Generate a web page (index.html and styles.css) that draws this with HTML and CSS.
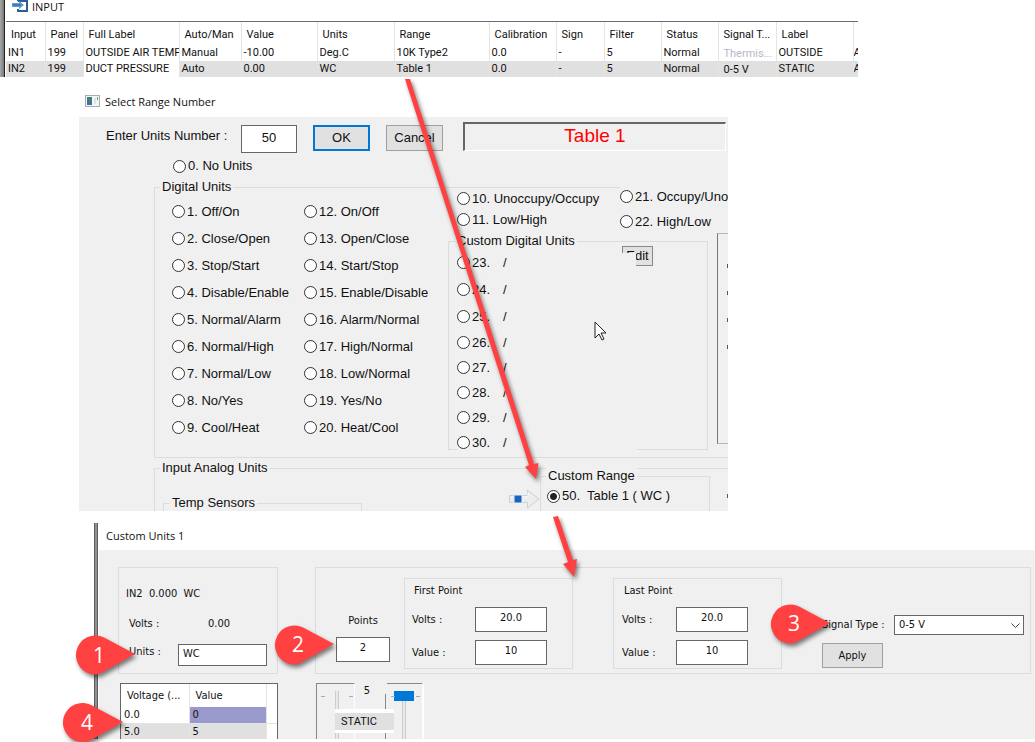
FILE: index.html
```html
<!DOCTYPE html>
<html lang="en">
<head>
  <title>Input range setup</title>
  <meta charset="utf-8">
  <link rel="stylesheet" href="styles.css">
</head>
<body>

<section class="inputs">
  <h1 class="title">
    <svg width="16" height="12" viewBox="0 0 16 12">
      <path d="M6 1V0M6 1H15V11H6V9" fill="none" stroke="#2b5f96" stroke-width="2"/>
      <path d="M0 3h7V1l5 4-5 4V7H0z" fill="#5b9bd5"/>
      <path d="M1 5h8" stroke="#2b5f96"/>
    </svg>
    INPUT
  </h1>
  <table class="grid">
    <colgroup>
      <col class="w39"><col class="w38"><col class="w96"><col class="w62"><col class="w76"><col class="w77"><col class="w95">
      <col class="w67"><col class="w48"><col class="w57"><col class="w57"><col class="w58"><col class="w77"><col>
    </colgroup>
    <thead>
    <tr>
      <th>Input</th><th>Panel</th><th>Full Label</th><th>Auto/Man</th><th>Value</th><th>Units</th><th>Range</th>
      <th>Calibration</th><th>Sign</th><th>Filter</th><th>Status</th><th>Signal T...</th><th>Label</th><th></th>
    </tr>
    </thead>
    <tbody>
    <tr>
      <td>IN1</td><td>199</td><td>OUTSIDE AIR TEMP</td><td>Manual</td><td>-10.00</td><td>Deg.C</td><td>10K Type2</td>
      <td>0.0</td><td>-</td><td>5</td><td>Normal</td><td class="signal muted">Thermis...</td><td>OUTSIDE</td><td>A</td>
    </tr>
    <tr class="selected">
      <td>IN2</td><td>199</td><td class="edit">DUCT PRESSURE</td><td>Auto</td><td>0.00</td><td>WC</td><td>Table 1</td>
      <td>0.0</td><td>-</td><td>5</td><td>Normal</td><td class="signal">0-5 V</td><td>STATIC</td><td>A</td>
    </tr>
    </tbody>
  </table>
</section>

<section class="range">
  <h2 class="title">
    <svg width="15" height="12" viewBox="0 0 15 12">
      <rect x="0.5" y="0.5" width="14" height="11" fill="#f4f6f6" stroke="#a9adb0"/>
      <rect x="2" y="2" width="5" height="8" fill="#3b8279"/>
      <rect x="2" y="6" width="5" height="4" fill="#47709b"/>
      <rect x="9" y="3" width="2" height="6" fill="#d5e5ea"/>
      <rect x="12" y="2" width="1" height="3" fill="#59a07b"/>
    </svg>
    Select Range Number
  </h2>
  <form class="panel">
    <div class="top">
      <label for="unitNumber">Enter Units Number :</label>
      <input type="text" class="box" id="unitNumber" value="50">
      <button type="button" class="btn ok">OK</button>
      <button type="button" class="btn">Cancel</button>
      <output class="current">Table 1</output>
    </div>
    <label class="radio none"><input type="radio" name="unit">0. No Units</label>

    <fieldset class="digital">
      <legend>Digital Units</legend>
      <div class="list">
        <label class="radio"><input type="radio" name="unit">1. Off/On</label>
        <label class="radio"><input type="radio" name="unit">2. Close/Open</label>
        <label class="radio"><input type="radio" name="unit">3. Stop/Start</label>
        <label class="radio"><input type="radio" name="unit">4. Disable/Enable</label>
        <label class="radio"><input type="radio" name="unit">5. Normal/Alarm</label>
        <label class="radio"><input type="radio" name="unit">6. Normal/High</label>
        <label class="radio"><input type="radio" name="unit">7. Normal/Low</label>
        <label class="radio"><input type="radio" name="unit">8. No/Yes</label>
        <label class="radio"><input type="radio" name="unit">9. Cool/Heat</label>
      </div>
      <div class="list">
        <label class="radio"><input type="radio" name="unit">12. On/Off</label>
        <label class="radio"><input type="radio" name="unit">13. Open/Close</label>
        <label class="radio"><input type="radio" name="unit">14. Start/Stop</label>
        <label class="radio"><input type="radio" name="unit">15. Enable/Disable</label>
        <label class="radio"><input type="radio" name="unit">16. Alarm/Normal</label>
        <label class="radio"><input type="radio" name="unit">17. High/Normal</label>
        <label class="radio"><input type="radio" name="unit">18. Low/Normal</label>
        <label class="radio"><input type="radio" name="unit">19. Yes/No</label>
        <label class="radio"><input type="radio" name="unit">20. Heat/Cool</label>
      </div>
      <div class="more">
        <div class="pair">
          <div class="pair-left">
            <label class="radio"><input type="radio" name="unit">10. Unoccupy/Occupy</label>
            <label class="radio"><input type="radio" name="unit">11. Low/High</label>
          </div>
          <div class="pair-right">
            <label class="radio"><input type="radio" name="unit">21. Occupy/Unoccupy</label>
            <label class="radio"><input type="radio" name="unit">22. High/Low</label>
          </div>
        </div>
        <div class="lower">
          <fieldset class="custom">
            <legend>Custom Digital Units</legend>
            <div class="slots">
              <label class="radio"><input type="radio" name="unit"><span>23.</span>/</label>
              <label class="radio"><input type="radio" name="unit"><span>24.</span>/</label>
              <label class="radio"><input type="radio" name="unit"><span>25.</span>/</label>
              <label class="radio"><input type="radio" name="unit"><span>26.</span>/</label>
              <label class="radio"><input type="radio" name="unit"><span>27.</span>/</label>
              <label class="radio"><input type="radio" name="unit"><span>28.</span>/</label>
              <label class="radio"><input type="radio" name="unit"><span>29.</span>/</label>
              <label class="radio"><input type="radio" name="unit"><span>30.</span>/</label>
            </div>
            <button type="button" class="btn edit-btn">Edit</button>
          </fieldset>
          <div class="strip"><i></i><i></i><i></i><i></i></div>
        </div>
      </div>
    </fieldset>

    <fieldset class="analog">
      <legend>Input Analog Units</legend>
      <fieldset class="sensors">
        <legend>Temp Sensors</legend>
      </fieldset>
      <svg class="pointer" width="31" height="20" viewBox="0 0 31 20">
        <path d="M0.5 6.5H18.5V1L30 10 18.5 19V13.5H0.5z" fill="#ececec" stroke="#cfcfcf"/>
        <path d="M2 8H19V4" fill="none" stroke="#fafafa"/>
        <rect x="5" y="6" width="8" height="8" fill="#1467bd" stroke="#e8f0f8"/>
      </svg>
      <fieldset class="custom-range">
        <legend>Custom Range</legend>
        <label class="radio"><input type="radio" name="unit" checked>50.&nbsp; Table 1 ( WC )</label>
      </fieldset>
      <div class="cut"><i></i></div>
    </fieldset>
  </form>
</section>

<section class="units">
  <h2 class="title">Custom Units 1</h2>
  <form class="panel">
    <div class="group status">
      <p>IN2&nbsp; 0.000&nbsp; WC</p>
      <div class="line"><span>Volts :</span><span class="num">0.00</span></div>
      <div class="line"><label for="unitName">Units :</label><input type="text" class="box" id="unitName" value="WC"></div>
    </div>

    <div class="group setup">
      <div class="points">
        <label for="points">Points</label>
        <input type="text" class="box" id="points" value="2">
      </div>
      <div class="group point">
        <h3>First Point</h3>
        <label for="firstVolts">Volts :</label><input type="text" class="box" id="firstVolts" value="20.0">
        <label for="firstValue">Value :</label><input type="text" class="box" id="firstValue" value="10">
      </div>
      <div class="group point last">
        <h3>Last Point</h3>
        <label for="lastVolts">Volts :</label><input type="text" class="box" id="lastVolts" value="20.0">
        <label for="lastValue">Value :</label><input type="text" class="box" id="lastValue" value="10">
      </div>
      <div class="signal-type">
        <label for="signalType">Signal Type :</label>
        <div class="select">
          <select id="signalType"><option>0-5 V</option></select>
          <svg width="9" height="6" viewBox="0 0 9 6"><path d="M0.5 0.5l4 4 4-4" fill="none" stroke="#444"/></svg>
        </div>
        <button type="button" class="btn">Apply</button>
      </div>
    </div>

    <div class="volt-box">
      <table class="volts">
        <colgroup><col class="w68"><col class="w77"><col></colgroup>
        <thead>
        <tr><th>Voltage (...</th><th>Value</th><th></th></tr>
        </thead>
        <tbody>
        <tr><td>0.0</td><td class="active">0</td><td></td></tr>
        <tr class="selected"><td>5.0</td><td>5</td><td></td></tr>
        </tbody>
      </table>
    </div>

    <div class="sliders">
      <div class="slide"><input type="range" class="covered" min="0" max="10" value="5" aria-label="Voltage"></div>
      <output class="level">5</output>
      <div class="slide right"><input type="range" min="0" max="10" value="0" aria-label="Value"></div>
      <span class="tag">STATIC</span>
    </div>
  </form>
</section>

<!-- step markers and arrows over the three windows -->
<svg class="notes" width="1035" height="742" viewBox="0 0 1035 742">
  <path d="M595 322v16l4-4 3 6 2-1-3-6h5z" fill="#fff" stroke="#222"/>
  <g class="arrow">
    <path d="M405 79h5L534 464l4.500-1L536 479 525 467l4-2z"/>
    <path d="M553 517l5-1 15 44 4-1-3 18-11-13 5-2z"/>
  </g>
  <g class="pin">
    <path d="M135 654L104 671.500Q100 674.500 95 674.500A19.500 19.500 0 1 1 104 637.500z"/>
    <path d="M334 644L303 661.500Q299 664.500 294 664.500A19.500 19.500 0 1 1 303 627.500z"/>
    <path d="M830 623L799 640.500Q795 643.500 790 643.500A19.500 19.500 0 1 1 799 606.500z"/>
    <path d="M123 722L92 739.500Q88 742 83 742A19.500 19.500 0 1 1 92 705.500z"/>
  </g>
  <g class="pin-text">
    <text x="99" y="663">1</text>
    <text x="298" y="652">2</text>
    <text x="794" y="631">3</text>
    <text x="87" y="730">4</text>
  </g>
</svg>

</body>
</html>
```

FILE: styles.css
```css
* {
  box-sizing: border-box;
}

body {
  position: relative;
  margin: 0;
  min-height: 742px;
  overflow-x: hidden;
  background-color: white;
  color: #111;
  font-family: "Liberation Sans", Arial, sans-serif;
  font-size: 13px;
  line-height: 16px;
}

input, button, select {
  font: inherit;
  color: inherit;
  margin: 0;
}

h1, h2, h3, p {
  margin: 0;
  font-weight: normal;
}

.title {
  display: flex;
  font-family: "Open Sans", sans-serif;
  font-size: 11px;
  line-height: 16px;
}

/* input list */
.inputs {
  margin-right: 177px;
  padding-left: 6px;
  background: linear-gradient(to right, #a8a8a8, #777 4px, #222 4px, #222 5px, white 5px);
  overflow: hidden;
}

.inputs .title {
  gap: 4px;
  height: 22px;
  padding-left: 6px;
  line-height: 13px;
  border-bottom: 1px solid #6c6c7c;
}

table {
  width: 100%;
  border-collapse: collapse;
  table-layout: fixed;
}

th, td {
  padding: 0 0 0 3px;
  height: 16px;
  font-weight: normal;
  text-align: left;
  white-space: nowrap;
  overflow: hidden;
  border-right: 1px solid #e4e4e4;
}

th {
  height: 23px;
  padding-left: 6px;
}

.grid {
  font-family: Roboto, sans-serif;
  font-size: 11px;
}

.grid td {
  padding-left: 2px;
}

.grid th {
  padding: 2px 0 0 5px;
}

.grid td:last-child, .grid th:last-child {
  padding-left: 0;
  border-right: none;
}

.selected {
  background-color: #e0e0e0;
}

.edit {
  background-color: white;
}

.grid .signal {
  padding: 2px 0 0 5px;
  line-height: 14px;
}

.muted {
  color: #b4b8c8;
}

.w38 { width: 38px; }
.w39 { width: 39px; }
.w48 { width: 48px; }
.w57 { width: 57px; }
.w58 { width: 58px; }
.w62 { width: 62px; }
.w67 { width: 67px; }
.w68 { width: 68px; }
.w76 { width: 76px; }
.w77 { width: 77px; }
.w95 { width: 95px; }
.w96 { width: 96px; }

/* shared controls */
.panel {
  background-color: #f0f0f0;
}

.box {
  border: 1px solid #666;
  border-radius: 0;
  background-color: white;
  padding: 0 0 4px;
  text-align: center;
  min-width: 0;
}

.btn {
  border: 1px solid #a0a0a0;
  background-color: #e1e1e1;
  padding: 0;
}

.radio {
  display: flex;
  align-items: center;
  gap: 2px;
  white-space: nowrap;
}

.radio input {
  appearance: none;
  flex: none;
  width: 13px;
  height: 13px;
  border: 1px solid #333;
  border-radius: 50%;
  background-color: white;
}

.radio input:checked {
  background: radial-gradient(circle, #222 3px, white 4px);
}

fieldset {
  margin: 0;
  padding: 0;
  min-width: 0;
  border: 1px solid #dcdcdc;
}

legend {
  margin-left: 5px;
  padding: 0 2px;
  height: 16px;
}

/* range dialog */
.range {
  margin: 8px 307px 0 79px;
  overflow: hidden;
}

.range .title {
  gap: 5px;
  padding: 9px 0 7px 6px;
}

.range .title svg {
  margin-top: 1px;
}

.top {
  display: flex;
  align-items: flex-start;
  padding: 5px 2px 0 27px;
}

.top label {
  width: 135px;
  padding-top: 6px;
  white-space: nowrap;
}

.top .box {
  width: 56px;
  height: 28px;
  margin: 3px 16px 0 0;
}

.top .btn {
  width: 57px;
  height: 26px;
  margin: 3px 20px 0 0;
}

.top .ok {
  border: 2px solid #0078d7;
  margin-right: 16px;
}

.current {
  flex: 1;
  height: 29px;
  border: 1px solid white;
  border-top: 2px solid #666;
  border-left: 2px solid #666;
  color: red;
  font-size: 19px;
  line-height: 24px;
  text-align: center;
}

.none {
  margin: 5px 0 5px 94px;
}

.digital {
  display: grid;
  grid-template-columns: 132px 144px minmax(0, 1fr);
  margin-left: 75px;
  padding: 0 0 7px 17px;
  border-right: none;
}

.digital > legend {
  margin-left: -12px;
}

.list {
  display: grid;
  grid-auto-rows: 27px;
  padding-top: 3px;
}

.pair {
  display: grid;
  grid-template-columns: 172px minmax(0, 1fr);
  height: 49px;
  margin-top: -11px;
}

.pair-left {
  display: grid;
  grid-auto-rows: 21px;
  padding: 4px 0 0 9px;
}

.pair-right {
  display: grid;
  grid-auto-rows: 25px;
  background-color: #f0f0f0;
}

.lower {
  display: flex;
  gap: 9px;
}

.custom {
  flex: 1;
  display: flex;
  align-items: flex-start;
  height: 217px;
  padding-left: 8px;
}

.custom legend {
  margin-left: -2px;
}

/* the list runs over the bottom line of its group */
.slots {
  display: grid;
  grid-template-rows: repeat(3, 27px) repeat(5, 25px);
  width: 180px;
  background-color: #f0f0f0;
}

.slots span {
  width: 29px;
}

.edit-btn {
  position: relative;
  width: 31px;
  height: 20px;
  margin: -3px 0 0 -15px;
  border-color: #888;
}

.edit-btn::after {
  content: "";
  position: absolute;
  left: -1px;
  top: 6px;
  width: 14px;
  height: 14px;
  background-color: #f0f0f0;
}

.strip {
  display: flex;
  flex-direction: column;
  align-items: flex-end;
  gap: 23px;
  width: 11px;
  height: 211px;
  padding-top: 30px;
  border: 1px solid #b8b8b8;
  border-left-color: #777;
  border-right: none;
}

.strip i, .cut i {
  width: 1px;
  height: 4px;
  background-color: #555;
}

.analog {
  display: flex;
  align-items: flex-start;
  margin: 2px 0 0 75px;
  padding-left: 8px;
  border-right: none;
  border-bottom: none;
}

.analog > legend {
  margin-left: -3px;
}

.sensors {
  width: 199px;
  margin-top: 19px;
  border-bottom: none;
}

.sensors legend {
  margin-left: 6px;
}

.pointer {
  margin: 13px 0 0 147px;
}

.custom-range {
  flex: 1;
  margin-top: -8px;
  padding: 0 0 3px 6px;
  border-bottom: none;
}

.custom-range legend {
  margin-left: -1px;
  background-color: #f0f0f0;
}

.custom-range .radio {
  height: 24px;
}

.cut {
  display: flex;
  justify-content: flex-end;
  width: 18px;
  padding-top: 18px;
}

/* custom units window */
.units {
  margin: 12px 0 0 94px;
  padding-left: 5px;
  background: linear-gradient(to right, #444, #aaa 2px, #444 4px, white 4px);
  font-family: "DejaVu Sans Condensed", "Open Sans", sans-serif;
  font-size: 11px;
}

.units .title {
  padding: 5px 0 6px 7px;
}

.units .panel {
  display: grid;
  grid-template-columns: 160px 1fr;
  gap: 9px 37px;
  padding: 17px 4px 0 19px;
}

.group {
  border: 1px solid #dcdcdc;
}

.status {
  padding: 18px 10px 6px 7px;
}

.line {
  display: flex;
  justify-content: space-between;
  margin-top: 14px;
  padding-left: 3px;
}

.num {
  margin-right: 37px;
}

.line + .line {
  margin-top: 12px;
}

.line .box {
  width: 89px;
  height: 22px;
  padding-left: 4px;
  text-align: left;
}

.setup {
  display: flex;
  align-items: flex-start;
  padding: 10px 6px 4px 20px;
}

.points {
  display: grid;
  gap: 8px;
  width: 54px;
  margin: 35px 14px 0 0;
  text-align: center;
}

.points .box {
  width: 100%;
  height: 25px;
}

.point {
  display: grid;
  grid-template-columns: 63px 72px;
  grid-template-rows: 16px 25px 25px;
  row-gap: 8px;
  align-items: center;
  width: 169px;
  margin-right: 40px;
  padding: 4px 0 3px 7px;
}

.point h3 {
  grid-column: 1 / 3;
  padding-left: 2px;
  font-size: 11px;
}

.point .box {
  width: 100%;
  height: 25px;
}

.point.last {
  grid-template-columns: 54px 72px;
  padding-left: 8px;
}

.signal-type {
  flex: 1;
  display: grid;
  grid-template-columns: 72px 1fr;
  row-gap: 8px;
  align-items: center;
  padding-top: 37px;
}

.signal-type label {
  white-space: nowrap;
}

.signal-type .btn {
  width: 61px;
  height: 25px;
}

.select {
  position: relative;
}

.select select {
  display: block;
  appearance: none;
  width: 100%;
  height: 20px;
  padding: 0 4px;
  border: 1px solid #666;
  border-radius: 0;
  background-color: white;
}

.select svg {
  position: absolute;
  right: 4px;
  top: 8px;
}

.volt-box {
  height: 56px;
  margin-left: 2px;
  border: 1px solid #666;
  border-bottom: none;
  background-color: white;
  overflow: hidden;
}

.volts tr:first-child td {
  border-bottom: 1px solid #e4e4e4;
}

.volts .selected td:last-child {
  background-color: white;
}

.volts td:last-child, .volts th:last-child {
  border-right: none;
}

.volts .active {
  background-color: #9999cc;
}

.sliders {
  position: relative;
  display: flex;
  width: 108px;
  height: 56px;
  margin-left: 1px;
  border-right: 1px solid white;
}

.slide {
  position: relative;
  width: 39px;
  border: 1px solid #888;
  border-right-color: white;
  border-bottom: none;
}

.slide.right {
  border-left: none;
  width: 36px;
}

.slide input {
  display: block;
  appearance: none;
  writing-mode: vertical-lr;
  width: 20px;
  height: 48px;
  margin: 7px 0 0 10px;
  background: linear-gradient(to right, transparent 8px, #ccc 8px, #ccc 9px, #e8e8e8 9px, #e8e8e8 11px, #ccc 11px, #ccc 12px, transparent 12px);
}

.slide.right input {
  margin-left: 7px;
}

.slide input::-webkit-slider-thumb {
  appearance: none;
  width: 20px;
  height: 10px;
  background-color: #0078d7;
}

/* its thumb sits behind the tag */
.slide .covered::-webkit-slider-thumb {
  background-color: transparent;
}

.slide::before, .slide::after {
  content: "";
  position: absolute;
  top: 12px;
  left: 4px;
  width: 4px;
  height: 1px;
  background-color: #aaa;
}

.slide::after {
  left: 32px;
}

.slide.right::after {
  left: 29px;
}

.level {
  width: 33px;
  padding-right: 8px;
  text-align: center;
}

.level::after {
  content: "";
  position: absolute;
  left: 69px;
  top: 11px;
  width: 1px;
  height: 45px;
  background-color: #888;
}

.tag {
  position: absolute;
  left: 19px;
  top: 26px;
  width: 59px;
  padding-left: 6px;
  border: solid white;
  border-width: 4px 0 3px;
  background-color: #e0e0e0;
  font-family: Roboto, sans-serif;
  font-size: 11px;
  line-height: 17px;
}

/* markers */
.notes {
  position: absolute;
  left: 0;
  top: 0;
  pointer-events: none;
}

.arrow, .pin {
  fill: #ff4141;
  filter: drop-shadow(2px 3px 2px rgba(0, 0, 0, 0.5));
}

.pin-text {
  fill: white;
  font-family: "Open Sans", sans-serif;
  font-size: 21px;
  text-anchor: middle;
}
```
